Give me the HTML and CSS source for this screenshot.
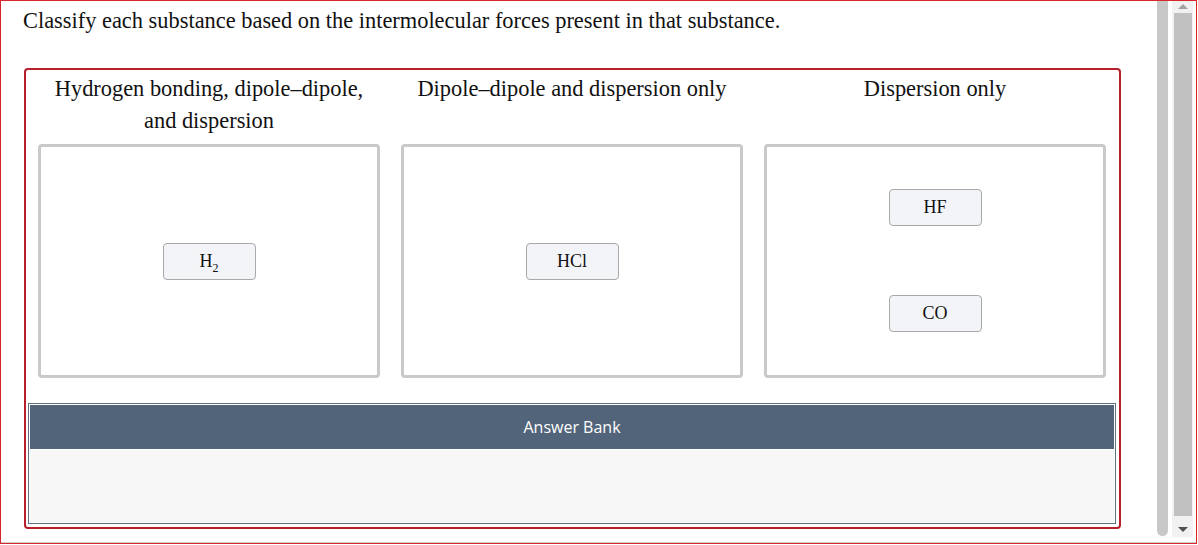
FILE: index.html
```html
<!DOCTYPE html>
<html>
<head>
<meta charset="utf-8">
<link rel="stylesheet" href="styles.css">
</head>
<body>
<div class="frame">
  <div class="content">
    <p class="title">Classify each substance based on the intermolecular forces present in that substance.</p>
    <div class="panel">
      <div class="heads">
        <div class="head">Hydrogen bonding, dipole–dipole,<br>and dispersion</div>
        <div class="head">Dipole–dipole and dispersion only</div>
        <div class="head">Dispersion only</div>
      </div>
      <div class="boxes">
        <div class="box"><div class="chip"><span>H<sub>2</sub></span></div></div>
        <div class="box"><div class="chip"><span>HCl</span></div></div>
        <div class="box stack"><div class="chip"><span>HF</span></div><div class="chip"><span>CO</span></div></div>
      </div>
      <div class="bank">
        <div class="bank-head">Answer Bank</div>
        <div class="bank-body"></div>
      </div>
    </div>
    <div class="hline"></div>
  </div>
  <div class="deco"></div>
  <div class="scroll">
    <div class="arrow up"></div>
    <div class="thumb"></div>
    <div class="arrow down"></div>
  </div>
</div>
</body>
</html>
```
FILE: styles.css
```css
html, body { margin: 0; padding: 0; background: #fff; }
.frame {
  width: 1197px; height: 544px; box-sizing: border-box;
  border: 1px solid #d8262a;
  display: flex; overflow: hidden;
}
.content { width: 1155px; display: flex; flex-direction: column; position: relative; }
.title {
  margin: 0; padding: 7px 0 0 22px; height: 67px; box-sizing: border-box;
  font-family: "Liberation Serif", serif; font-size: 22.4px; color: #111;
  line-height: 26px;
}
.panel {
  margin-left: 23px; width: 1097px; height: 461px; box-sizing: border-box;
  border: 2px solid #b5202c; border-radius: 4px;
  display: flex; flex-direction: column;
}
.heads { display: flex; padding: 3px 13px 0 12px; height: 74px; box-sizing: border-box; gap: 21px; }
.head {
  width: 342px; text-align: center;
  font-family: "Liberation Serif", serif; font-size: 22.4px; line-height: 32px; color: #111;
}
.boxes { display: flex; padding: 0 13px 0 12px; gap: 21px; }
.box {
  width: 342px; height: 234px; box-sizing: border-box;
  border: 3px solid #c9c9c9; border-radius: 4px;
  display: flex; align-items: center; justify-content: center;
}
.box.stack { flex-direction: column; gap: 69px; padding-bottom: 1px; }
.chip {
  width: 93px; height: 37px; box-sizing: border-box;
  border: 1px solid #a9a9a9; border-radius: 4px; background: #f2f4f8;
  display: flex; align-items: center; justify-content: center;
  font-family: "Liberation Serif", serif; font-size: 18px; color: #111;
}
.chip sub { font-size: 12px; vertical-align: -5px; line-height: 0; }
.bank {
  margin: 25px 3px 0 2px; height: 121px; box-sizing: border-box;
  border: 1px solid #607080; padding: 1px;
  display: flex; flex-direction: column;
}
.bank-head {
  height: 44px; background: #526479; color: #fff;
  display: flex; align-items: center; justify-content: center;
  font-family: "Open Sans", sans-serif; font-size: 16px;
}
.bank-body { flex: 1; background: #f7f7f7; margin-top: 1px; }
.hline { position: absolute; left: 0; right: -42px; bottom: 0; height: 1px; background: #cfcfcf; }
.deco {
  width: 11px; margin-left: 1px; height: 536px; margin-top: -1px;
  background: #c8c8c8; border-radius: 0 0 6px 6px;
}
.scroll {
  width: 21px; margin-left: 4px; background: #f1f1f1;
  display: flex; flex-direction: column; align-items: center;
  height: 537px; margin-top: -1px;
}
.arrow { width: 0; height: 0; border-left: 5px solid transparent; border-right: 5px solid transparent; }
.arrow.up { border-bottom: 5px solid #a3a3a3; margin-top: 4px; }
.arrow.down { border-top: 5px solid #505050; margin-top: 11px; }
.thumb { width: 18px; height: 503px; background: #c1c1c1; margin-top: 4px; }
```
